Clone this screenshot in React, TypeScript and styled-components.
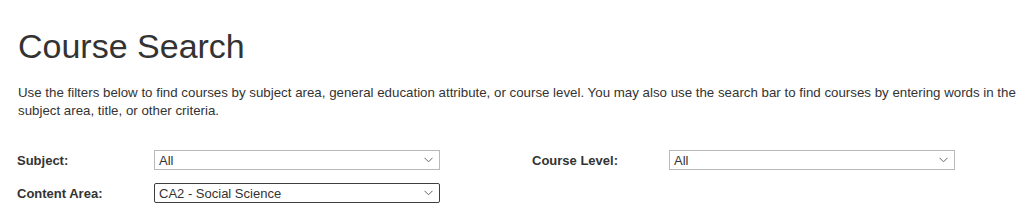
import React, { useState } from 'react';
import styled, { createGlobalStyle } from 'styled-components';

const GlobalStyle = createGlobalStyle`
  html, body {
    margin: 0;
    padding: 0;
    background: #fff;
  }
  body {
    font-family: "Liberation Sans", Arial, sans-serif;
    color: #333;
  }
`;

const Page = styled.div`
  padding: 26px 4px 0 18px;
`;

const Title = styled.h1`
  margin: 0;
  font-size: 34px;
  line-height: 40px;
  font-weight: 400;
  color: #333;
`;

const Intro = styled.p`
  margin: 18px 0 0;
  font-size: 13.3px;
  line-height: 18px;
  color: #333;
`;

const Filters = styled.div`
  display: grid;
  grid-template-columns: 515px 1fr;
  row-gap: 13px;
  margin-top: 30px;
  margin-left: -1px;
`;

const Field = styled.div`
  display: grid;
  grid-template-columns: 137px 286px;
  align-items: center;
`;

const Label = styled.label`
  font-size: 13px;
  font-weight: 700;
  color: #333;
`;

const SelectWrap = styled.div`
  position: relative;
  height: 20px;
`;

const Select = styled.select<{ $active?: boolean }>`
  appearance: none;
  -webkit-appearance: none;
  width: 100%;
  height: 20px;
  margin: 0;
  padding: 0 20px 0 4px;
  font-family: "Liberation Sans", Arial, sans-serif;
  font-size: 13px;
  color: #333;
  background: #fff;
  border: 1px solid ${({ $active }) => ($active ? '#3f3f3f' : '#b9b9b9')};
  border-radius: ${({ $active }) => ($active ? '2px' : '0')};
  outline: none;
`;

const Chevron = styled.svg`
  position: absolute;
  right: 7px;
  top: 7px;
  width: 9px;
  height: 6px;
  pointer-events: none;
`;

type FilterProps = {
  label: string;
  options: string[];
  value: string;
  active?: boolean;
};

const Filter = ({ label, options, value, active }: FilterProps) => {
  const [current, setCurrent] = useState(value);
  return (
    <Field>
      <Label>{label}</Label>
      <SelectWrap>
        <Select $active={active} value={current} onChange={(e) => setCurrent(e.target.value)}>
          {options.map((o) => (
            <option key={o}>{o}</option>
          ))}
        </Select>
        <Chevron viewBox="0 0 9 6">
          <path d="M0.5 0.8 L4.5 4.8 L8.5 0.8" fill="none" stroke="#666" strokeWidth="1" />
        </Chevron>
      </SelectWrap>
    </Field>
  );
};

const App = () => {
  return (
    <Page>
      <GlobalStyle />
      <Title>Course Search</Title>
      <Intro>
        Use the filters below to find courses by subject area, general education attribute, or course level. You may
        also use the search bar to find courses by entering words in the subject area, title, or other criteria.
      </Intro>
      <Filters>
        <Filter label="Subject:" options={['All']} value="All" />
        <Filter label="Course Level:" options={['All']} value="All" />
        <Filter label="Content Area:" options={['All', 'CA2 - Social Science']} value="CA2 - Social Science" active />
      </Filters>
    </Page>
  );
};

export default App;
